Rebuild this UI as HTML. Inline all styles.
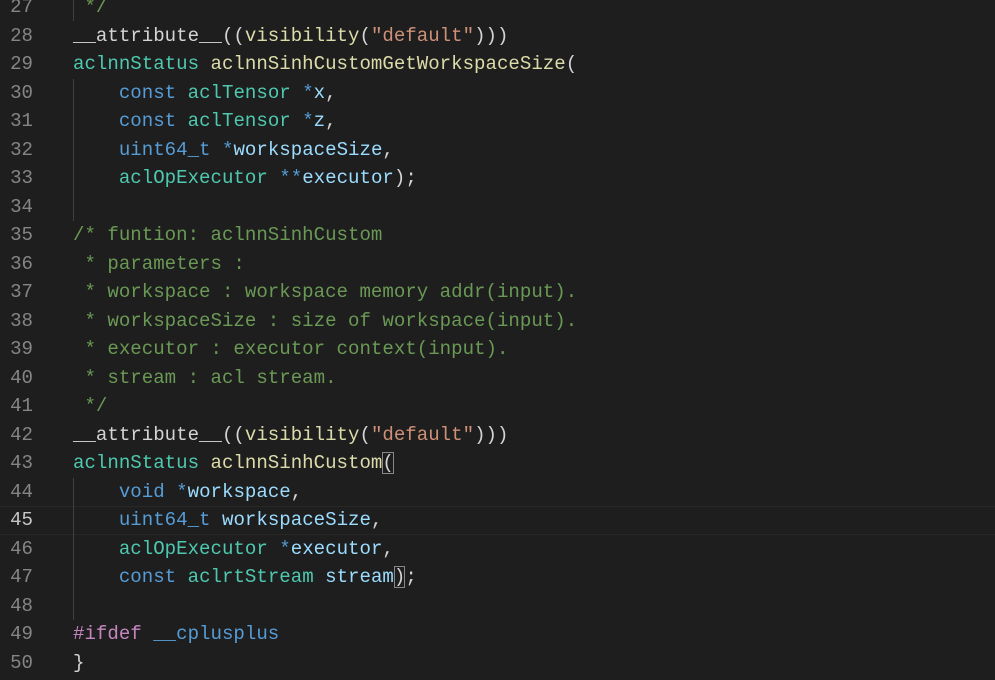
<!DOCTYPE html>
<html><head><meta charset="utf-8"><style>
body{margin:0;background:#1e1e1e;width:995px;height:680px;overflow:hidden;font-family:"Liberation Mono",monospace;font-size:19.1px;color:#d4d4d4}
.c{position:absolute;top:-6.8px;left:0;width:995px}
.l{height:28.5px;line-height:28.5px;white-space:pre;position:relative}
.n{position:absolute;left:0;width:33px;text-align:right;color:#858585}
.t{position:absolute;left:73px}
.cur{box-shadow:inset 0 1px #282828,inset 0 -1px #282828}
.cur .n{color:#c6c6c6}
.g{position:absolute;left:73px;width:1px;background:#404040}
.k{color:#569cd6}.ty{color:#4ec9b0}.v{color:#9cdcfe}.f{color:#dcdcaa}.s{color:#ce9178}.cm{color:#6a9955}.p{color:#c586c0}
.b{outline:1px solid #888;outline-offset:-1px}
</style></head><body>
<div class="c">
<div class="l"><span class="n">27</span><span class="t cm"> */</span></div>
<div class="l"><span class="n">28</span><span class="t">__attribute__((<span class="f">visibility</span>(<span class="s">"default"</span>)))</span></div>
<div class="l"><span class="n">29</span><span class="t"><span class="ty">aclnnStatus</span> <span class="f">aclnnSinhCustomGetWorkspaceSize</span>(</span></div>
<div class="l"><span class="n">30</span><span class="t">    <span class="k">const</span> <span class="ty">aclTensor</span> <span class="k">*</span><span class="v">x</span>,</span></div>
<div class="l"><span class="n">31</span><span class="t">    <span class="k">const</span> <span class="ty">aclTensor</span> <span class="k">*</span><span class="v">z</span>,</span></div>
<div class="l"><span class="n">32</span><span class="t">    <span class="k">uint64_t</span> <span class="k">*</span><span class="v">workspaceSize</span>,</span></div>
<div class="l"><span class="n">33</span><span class="t">    <span class="ty">aclOpExecutor</span> <span class="k">**</span><span class="v">executor</span>);</span></div>
<div class="l"><span class="n">34</span></div>
<div class="l"><span class="n">35</span><span class="t cm">/* funtion: aclnnSinhCustom</span></div>
<div class="l"><span class="n">36</span><span class="t cm"> * parameters :</span></div>
<div class="l"><span class="n">37</span><span class="t cm"> * workspace : workspace memory addr(input).</span></div>
<div class="l"><span class="n">38</span><span class="t cm"> * workspaceSize : size of workspace(input).</span></div>
<div class="l"><span class="n">39</span><span class="t cm"> * executor : executor context(input).</span></div>
<div class="l"><span class="n">40</span><span class="t cm"> * stream : acl stream.</span></div>
<div class="l"><span class="n">41</span><span class="t cm"> */</span></div>
<div class="l"><span class="n">42</span><span class="t">__attribute__((<span class="f">visibility</span>(<span class="s">"default"</span>)))</span></div>
<div class="l"><span class="n">43</span><span class="t"><span class="ty">aclnnStatus</span> <span class="f">aclnnSinhCustom</span><span class="b">(</span></span></div>
<div class="l"><span class="n">44</span><span class="t">    <span class="k">void</span> <span class="k">*</span><span class="v">workspace</span>,</span></div>
<div class="l cur"><span class="n">45</span><span class="t">    <span class="k">uint64_t</span> <span class="v">workspaceSize</span>,</span></div>
<div class="l"><span class="n">46</span><span class="t">    <span class="ty">aclOpExecutor</span> <span class="k">*</span><span class="v">executor</span>,</span></div>
<div class="l"><span class="n">47</span><span class="t">    <span class="k">const</span> <span class="ty">aclrtStream</span> <span class="v">stream</span><span class="b">)</span>;</span></div>
<div class="l"><span class="n">48</span></div>
<div class="l"><span class="n">49</span><span class="t"><span class="p">#ifdef</span> <span class="k">__cplusplus</span></span></div>
<div class="l"><span class="n">50</span><span class="t">}</span></div>
</div>
<div class="g" style="top:0;height:21px"></div>
<div class="g" style="top:79px;height:142px"></div>
<div class="g" style="top:478px;height:142px"></div>
</body></html>
